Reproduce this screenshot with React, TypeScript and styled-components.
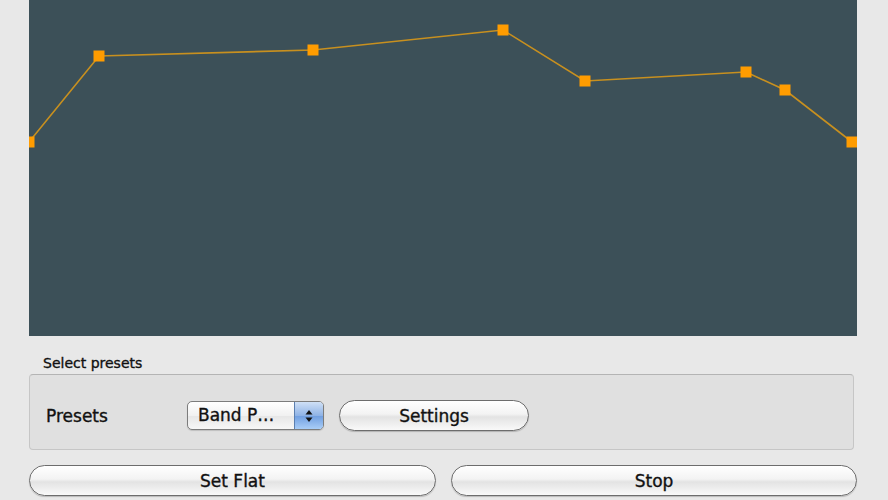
import React from "react";
import styled, { createGlobalStyle } from "styled-components";

const Global = createGlobalStyle`
  html, body { margin: 0; padding: 0; background: #e8e8e8; }
  body {
    font-family: "DejaVu Sans", "Liberation Sans", sans-serif;
    color: #111;
    -webkit-text-stroke: 0.35px #111;
  }
`;

const Page = styled.div`
  width: 888px;
  height: 500px;
  box-sizing: border-box;
  padding: 0 31px 0 29px;
  display: flex;
  flex-direction: column;
  overflow: hidden;
`;

const Chart = styled.div`
  height: 336px;
  background: #3c5058;
  flex-shrink: 0;
  svg { display: block; }
`;

const GroupTitle = styled.div`
  font-size: 14px;
  margin: 19px 0 2px 14px;
  line-height: 17px;
`;

const GroupBox = styled.div`
  height: 76px;
  margin-right: 3px;
  box-sizing: border-box;
  background: #e0e0e0;
  border: 1px solid #c6c6c6;
  border-top-color: #b4b4b4;
  border-radius: 4px;
  display: flex;
  align-items: center;
  padding: 7px 0 0 16px;
`;

const Label = styled.span`
  font-size: 17px;
  width: 141px;
`;

const Popup = styled.div`
  width: 137px;
  height: 29px;
  box-sizing: border-box;
  border: 1px solid #7c7c7c;
  border-radius: 5px;
  background: linear-gradient(#ffffff, #f1f1f1 50%, #e6e6e6 51%, #f7f7f7);
  display: flex;
  overflow: hidden;
  box-shadow: 0 1px 1px rgba(0,0,0,0.15);
`;

const PopupText = styled.span`
  flex: 1;
  font-size: 17px;
  line-height: 27px;
  padding-left: 10px;
`;

const Stepper = styled.div`
  width: 28px;
  border-left: 1px solid #5b7fb0;
  background: linear-gradient(#cfe0f6, #8fb3e6 50%, #6f9ee0 51%, #a9cdf7);
  display: flex;
  align-items: center;
  justify-content: center;
`;

const Pill = styled.button<{ $w: number }>`
  width: ${(p) => p.$w}px;
  height: 31px;
  box-sizing: border-box;
  border: 1px solid #6d6d6d;
  border-radius: 16px;
  background: linear-gradient(#ffffff, #f3f3f3 45%, #e3e3e3 55%, #f9f9f9);
  box-shadow: 0 1px 1px rgba(0,0,0,0.2);
  font-family: "DejaVu Sans", "Liberation Sans", sans-serif;
  font-size: 17px;
  color: #111;
  -webkit-text-stroke: 0.35px #111;
  padding: 0;
`;

const SettingsGap = styled.div`
  width: 15px;
`;

const BottomRow = styled.div`
  display: grid;
  grid-template-columns: 407px 406px;
  column-gap: 15px;
  margin-top: 15px;
`;

const points: [number, number][] = [
  [0, 142], [70, 56], [284, 50], [474, 30], [556, 81], [717, 72], [756, 90], [823, 142],
];

function EqChart() {
  const d = points.map(([x, y], i) => `${i ? "L" : "M"}${x} ${y}`).join(" ");
  return (
    <Chart>
      <svg width="828" height="336" viewBox="0 0 828 336">
        <path d={d} fill="none" stroke="#c8901f" strokeWidth="1.6" />
        {points.map(([x, y], i) => (
          <rect key={i} x={x - 5.5} y={y - 5.5} width="11" height="11" fill="#ff9c00" />
        ))}
      </svg>
    </Chart>
  );
}

export default function App() {
  return (
    <>
      <Global />
      <Page>
        <EqChart />
        <GroupTitle>Select presets</GroupTitle>
        <GroupBox>
          <Label>Presets</Label>
          <Popup>
            <PopupText>Band P…</PopupText>
            <Stepper>
              <svg width="8" height="14" viewBox="0 0 8 14">
                <path d="M4 1 L7.5 5.5 L0.5 5.5 Z" fill="#111" />
                <path d="M4 13 L7.5 8.5 L0.5 8.5 Z" fill="#111" />
              </svg>
            </Stepper>
          </Popup>
          <SettingsGap />
          <Pill $w={190}>Settings</Pill>
        </GroupBox>
        <BottomRow>
          <Pill $w={407}>Set Flat</Pill>
          <Pill $w={406}>Stop</Pill>
        </BottomRow>
      </Page>
    </>
  );
}
